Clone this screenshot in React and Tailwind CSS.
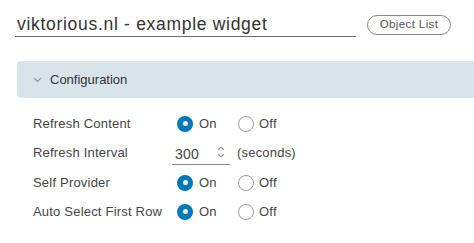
import React from "react";

function Radio({ checked }) {
  return checked ? (
    <span className="flex h-[16px] w-[16px] items-center justify-center rounded-full bg-[#0079b8]">
      <span className="h-[5px] w-[5px] rounded-full bg-white" />
    </span>
  ) : (
    <span className="h-[16px] w-[16px] rounded-full border border-[#9a9a9a] bg-white" />
  );
}

function OnOff({ value }) {
  return (
    <div className="flex items-center">
      <div className="flex w-[61px] items-center gap-[6px]">
        <Radio checked={value} />
        <span>On</span>
      </div>
      <div className="flex items-center gap-[5px]">
        <Radio checked={!value} />
        <span>Off</span>
      </div>
    </div>
  );
}

function Row({ label, children }) {
  return (
    <div className="flex h-[29px] items-center">
      <div className="w-[144px]">{label}</div>
      {children}
    </div>
  );
}

export default function App() {
  return (
    <div
      className="h-[243px] w-[474px] overflow-hidden bg-white text-[#3a3a3a]"
      style={{ fontFamily: '"Liberation Sans", Arial, sans-serif' }}
    >
      <div className="flex items-start pt-[13px]">
        <div className="ml-[15px] w-[341px] border-b border-[#6b6b6b] pl-[2px] text-[17.5px] leading-[23px] tracking-[0.7px] text-[#333]">
          viktorious.nl - example widget
        </div>
        <button className="ml-[11px] mt-[2px] flex h-[20px] w-[84px] items-center justify-center rounded-full border border-[#8a8a8a] text-[11.5px] tracking-[0.4px] text-[#555]">
          Object List
        </button>
      </div>

      <div className="ml-[17px] mt-[24px] flex h-[37px] items-center rounded-l-[4px] bg-[#d9e3ea] pl-[16px]">
        <svg width="9" height="6" viewBox="0 0 9 6" className="text-[#8c9aa5]">
          <polyline points="1,1 4.5,4.5 8,1" fill="none" stroke="currentColor" strokeWidth="1.2" />
        </svg>
        <span className="ml-[8px] text-[13px] text-[#333]">Configuration</span>
      </div>

      <div className="mt-[11px] pl-[33px] text-[13px] tracking-[0.2px] text-[#444]">
        <Row label="Refresh Content">
          <OnOff value={true} />
        </Row>
        <div className="flex h-[30px] items-center">
          <div className="w-[139px]">Refresh Interval</div>
          <div className="relative flex h-[24px] w-[58px] items-center border-b border-[#8a8a8a] pl-[3px] pt-[3px] text-[14px]">
            300
            <svg
              width="8"
              height="14"
              viewBox="0 0 8 14"
              className="absolute right-[5px] top-[4px] text-[#9a9a9a]"
            >
              <polyline points="1,5 4,2 7,5" fill="none" stroke="currentColor" strokeWidth="1.1" />
              <polyline points="1,9 4,12 7,9" fill="none" stroke="currentColor" strokeWidth="1.1" />
            </svg>
          </div>
          <span className="ml-[7px]">(seconds)</span>
        </div>
        <Row label="Self Provider">
          <OnOff value={true} />
        </Row>
        <Row label="Auto Select First Row">
          <OnOff value={true} />
        </Row>
      </div>
    </div>
  );
}
